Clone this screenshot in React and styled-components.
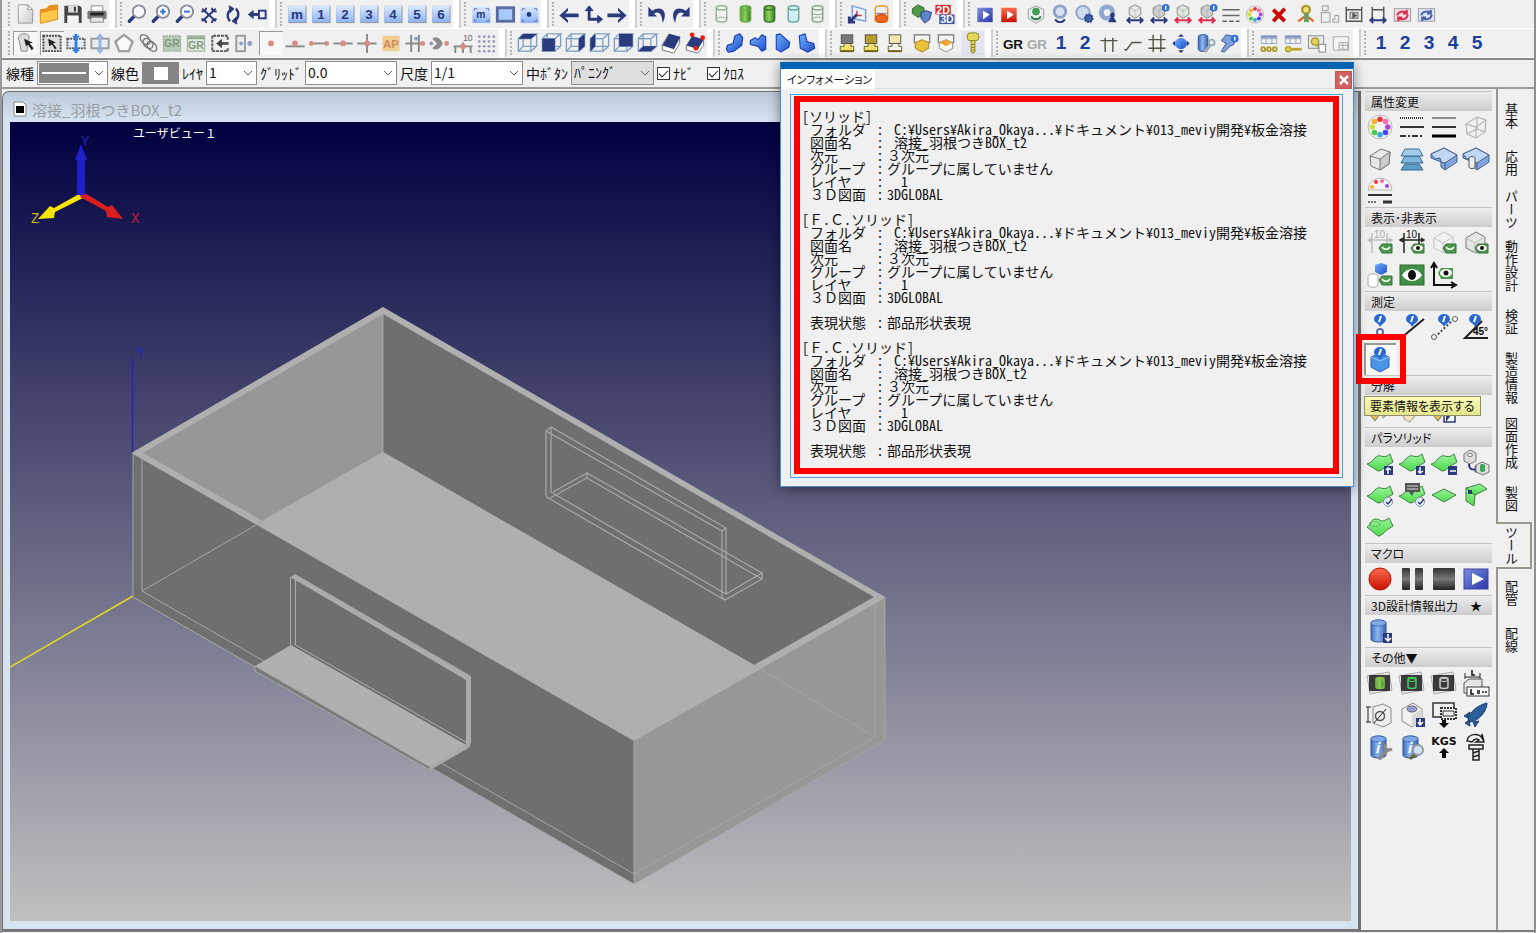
import React, { useState } from "react";
import styled, { createGlobalStyle, css } from "styled-components";

const GlobalStyle = createGlobalStyle`
  *, *::before, *::after {
    box-sizing: border-box;
  }
  body {
    margin: 0;
    background: #f0f0f0;
    color: #111;
    font-family: "Noto Sans CJK JP", "Liberation Sans", sans-serif;
    font-size: 14px;
  }
  button, select, input {
    font: inherit;
    color: inherit;
    margin: 0;
  }
`;

const NAVY = "#2b3a7c";
const GRAY = "#8a8a8a";

/* ---------- drawing parts shared by the icons ---------- */

const Defs = () => (
  <svg width="0" height="0" style={{ position: "absolute" }} aria-hidden="true">
    <defs>
      <linearGradient id="gKey" x2="0" y2="1">
        <stop offset="0" stopColor="#dbe9ff" />
        <stop offset="1" stopColor="#8db4f5" />
      </linearGradient>
      <linearGradient id="gGreenCyl">
        <stop offset="0" stopColor="#4f9a2c" />
        <stop offset=".45" stopColor="#8fd45c" />
        <stop offset="1" stopColor="#2f7a1c" />
      </linearGradient>
      <linearGradient id="gBlueCyl">
        <stop offset="0" stopColor="#3f6fc4" />
        <stop offset=".45" stopColor="#8fb6ee" />
        <stop offset="1" stopColor="#3a63b4" />
      </linearGradient>
      <linearGradient id="gBlue" x2="1" y2="1">
        <stop offset="0" stopColor="#6fb0ff" />
        <stop offset="1" stopColor="#1f4fc8" />
      </linearGradient>
      <linearGradient id="gPlay" x2="1" y2="1">
        <stop offset="0" stopColor="#7f8fe0" />
        <stop offset="1" stopColor="#2a35a8" />
      </linearGradient>
      <linearGradient id="gRed" x2="0" y2="1">
        <stop offset="0" stopColor="#ff6a50" />
        <stop offset="1" stopColor="#c81000" />
      </linearGradient>
      <linearGradient id="gDark" x2="0" y2="1">
        <stop offset="0" stopColor="#333" />
        <stop offset=".5" stopColor="#777" />
        <stop offset="1" stopColor="#222" />
      </linearGradient>
      <linearGradient id="gLeaf" x2="0" y2="1">
        <stop offset="0" stopColor="#9af59a" />
        <stop offset="1" stopColor="#4fd84f" />
      </linearGradient>
      <linearGradient id="gPaper" x2="1" y2="1">
        <stop offset="0" stopColor="#fff" />
        <stop offset="1" stopColor="#ccc" />
      </linearGradient>
    </defs>
  </svg>
);

const Lens = ({ children }) => (
  <g>
    <path d="M10 14L4 20" stroke={NAVY} strokeWidth="3.5" strokeLinecap="round" />
    <circle cx="14" cy="10" r="6.5" fill="#f4f6fa" stroke="#8b8f99" strokeWidth="2" />
    {children}
  </g>
);

const Key = ({ label }) => (
  <g>
    <rect x="3" y="4" width="19" height="18" fill="#9a9a9a" />
    <rect x="3" y="4" width="18" height="17" fill="url(#gKey)" />
    <text x="12" y="18" textAnchor="middle" fontSize="14" fontWeight="700" fontFamily="Liberation Sans" fill={NAVY}>
      {label}
    </text>
  </g>
);

const Digit = ({ label, color = "#1c3f9a", size = 20 }) => (
  <text x="12" y="19" textAnchor="middle" fontSize={size} fontWeight="700" fontFamily="Liberation Sans" fill={color}>
    {label}
  </text>
);

const Cyl = ({ fill = "none", stroke = "#4f8a54" }) => (
  <g fill={fill} stroke={stroke} strokeWidth="1.3">
    <path d="M7 6v12c0 4 11 4 11 0V6" />
    <ellipse cx="12.500" cy="6" rx="5.500" ry="2.300" />
    {fill === "none" && <path d="M7 18c0-3 11-3 11 0" opacity=".6" />}
  </g>
);

const WireCube = ({ face }) => (
  <g>
    <g fill="none" stroke="#7fa0c4" strokeWidth="1.4">
      <rect x="3" y="8" width="13" height="13" />
      <path d="M3 8l5-5h14l-6 5M22 3v13l-6 5M8 3v13h14M8 16l-5 5" />
    </g>
    <path d={face} fill={NAVY} />
  </g>
);

const Hex = ({ fill = "#e8e8e8", stroke = "#8a8a8a" }) => (
  <g stroke={stroke} fill={fill} strokeLinejoin="round">
    <path d="M12 3l6 3v7l-6 4-6-4V6z" />
    <path d="M6 6l6 3 6-3M12 9v8" fill="none" opacity=".4" />
  </g>
);

const Solid = ({ d }) => (
  <path d={d} fill="url(#gBlue)" stroke="#1b3fae" strokeWidth="1.2" strokeLinejoin="round" />
);

const Span = ({ color }) => (
  <path d="M4 19h16M7 16l-3 3 3 3M17 16l3 3-3 3" fill="none" stroke={color} strokeWidth="2" />
);

const Info = ({ x = 19, y = 6 }) => (
  <g>
    <circle cx={x} cy={y} r="4" fill="#2f6fd6" />
    <path d={`M${x} ${y - 2}v4`} stroke="#fff" strokeWidth="1.5" />
  </g>
);

const Person = ({ lid, body = "#efe070" }) => (
  <g stroke="#6f6420" fill={body}>
    <path d="M5 21v-5h4v-3h7v3h3v5z" />
    <path d="M5 21h14" strokeWidth="2" />
    <rect x="6" y="4" width="12" height="9" fill={lid} stroke="#555" />
  </g>
);

const Wheel = ({ cx, cy, r }) => {
  const hues = ["#e33", "#f6a", "#a4c", "#44f", "#3ad", "#4c4", "#cd3", "#fa3"];
  return (
    <g>
      <circle cx={cx} cy={cy} r={r} fill="#f4f4f4" stroke="#b8b8b8" />
      {hues.map((h, i) => (
        <circle
          key={h}
          cx={cx + Math.sin((i * Math.PI) / 4) * r * 0.65}
          cy={cy - Math.cos((i * Math.PI) / 4) * r * 0.65}
          r={r * 0.23}
          fill={h}
        />
      ))}
    </g>
  );
};

/* ---------- toolbar icons, 24 x 24 ---------- */

const icons = {
  new: <path d="M5 3h10l5 5v14H5zM15 3v5h5" fill="url(#gPaper)" stroke="#999" />,
  open: (
    <g stroke="#d98a10" strokeLinejoin="round">
      <path d="M3 8l7-1 2-3 9-1v5L3 12z" fill="#e8941c" />
      <path d="M3 11l18-4v11L5 22H3z" fill="#ffc84a" />
    </g>
  ),
  save: (
    <g>
      <path d="M3 4h16l2 2v16H3z" fill="#444" />
      <rect x="7" y="4" width="10" height="7" fill="#ddd" />
      <rect x="13" y="5" width="2" height="5" fill="#333" />
      <rect x="6" y="14" width="12" height="8" fill="#f4f4f4" />
    </g>
  ),
  print: (
    <g>
      <path d="M6 4h12v6H6z" fill="#fff" stroke="#888" />
      <rect x="2" y="9" width="20" height="9" rx="2" fill="#777" />
      <rect x="5" y="11" width="14" height="3" fill="#222" />
      <path d="M6 16h12l1 5H5z" fill="#e8e8e8" stroke="#888" />
    </g>
  ),
  lens: <Lens />,
  zoomIn: (
    <Lens>
      <path d="M14 7v6M11 10h6" stroke="#2f6fd6" strokeWidth="2" />
    </Lens>
  ),
  zoomOut: (
    <Lens>
      <path d="M11 10h6" stroke="#2f6fd6" strokeWidth="2" />
    </Lens>
  ),
  fit: (
    <g fill="none" stroke={NAVY}>
      <path d="M5 7l14 13M19 7L5 20" strokeWidth="2" />
      <path d="M9 6c0 3-2 4-5 4M15 6c0 3 2 4 5 4M9 22c0-3-2-4-5-4M15 22c0-3 2-4 5-4" strokeWidth="2" />
    </g>
  ),
  rotate: (
    <g fill="none" stroke={NAVY} strokeWidth="2.500">
      <path d="M9 20a8 8 0 0 1 2-13" />
      <path d="M15 7a8 8 0 0 1-2 13" />
      <path d="M8 4l5 3-4 4zM16 23l-5-3 4-4z" strokeWidth="1" fill={NAVY} />
    </g>
  ),
  pan: (
    <g fill="none" stroke={NAVY} strokeWidth="2">
      <path d="M14 13H5" strokeWidth="3" />
      <path d="M3 13l5-4v8z" fill={NAVY} strokeWidth="1" />
      <rect x="14" y="9" width="7" height="8" />
    </g>
  ),
  frameM: (
    <g>
      <rect x="3" y="5" width="19" height="17" fill="url(#gKey)" />
      <path d="M5 9V7h3M17 7h3v2M5 18v2h3M17 20h3v-2" fill="none" stroke="#6477a8" />
      <text x="12" y="17" textAnchor="middle" fontSize="10" fontWeight="700" fill={NAVY}>
        m
      </text>
    </g>
  ),
  frameFull: <rect x="4" y="6" width="17" height="14" fill="#a9c8fb" stroke="#5a6ca0" strokeWidth="3" />,
  frameDot: (
    <g>
      <rect x="3" y="5" width="19" height="17" fill="url(#gKey)" />
      <path d="M5 9V7h3M17 7h3v2M5 18v2h3M17 20h3v-2" fill="none" stroke="#6477a8" />
      <circle cx="12" cy="13" r="2.500" fill={NAVY} />
    </g>
  ),
  left: <path d="M2 14l9-8v3l-3 3h14v4H8l3 3v3z" fill={NAVY} />,
  right: <path d="M22 14l-9-8v3l3 3H2v4h14l-3 3v3z" fill={NAVY} />,
  upRight: (
    <g stroke={NAVY} fill={NAVY}>
      <path d="M8 8v10h10" strokeWidth="3" fill="none" />
      <path d="M8 4l4 5H4zM22 18l-5-4v8z" />
    </g>
  ),
  undo: <path d="M3 5v10h9l-3-3c5-3 8 0 9 10C24 10 17 3 7 9z" fill={NAVY} />,
  redo: <path d="M21 5v10h-9l3-3c-5-3-8 0-9 10C0 10 7 3 17 9z" fill={NAVY} />,
  cylOpen: <Cyl stroke="#8aa88c" />,
  cylGreen: <Cyl fill="url(#gGreenCyl)" stroke="#6aae50" />,
  cylDark: <Cyl fill="url(#gGreenCyl)" stroke="#2d6e22" />,
  cylBlue: <Cyl fill="#cdeefa" stroke="#5aa087" />,
  cylWire: (
    <g>
      <Cyl stroke="#7f9c84" />
      <path d="M7 11c0 3 11 3 11 0" fill="none" stroke="#7f9c84" />
    </g>
  ),
  plane: (
    <g fill="none">
      <path d="M7 4l14 4v12L7 17z" stroke="#7b9cdc" strokeWidth="1.500" fill="#eaf1ff" />
      <path d="M12 9v5h5" stroke="#e33" strokeWidth="1.500" />
      <path d="M12 13l-7 7M4 15v6h6" stroke={NAVY} strokeWidth="3" />
    </g>
  ),
  cylOrange: (
    <g strokeWidth="1.500">
      <path d="M6 7v12c0 3 13 3 13 0V7c0-4-13-4-13 0z" fill="#eee" stroke="#e8982c" />
      <path d="M6 12h13" stroke="#999" />
      <ellipse cx="12.500" cy="17" rx="6" ry="4" fill="#f46a1c" stroke="#d04a10" />
    </g>
  ),
  swapSolid: (
    <g>
      <path d="M3 7l6-4 6 3v7l-6 3-6-4z" fill="#4f9a4a" stroke="#2c6a2a" />
      <path d="M12 11l5-2 6 2-2 7-5 4-4-5z" fill="#5b86cc" stroke={NAVY} />
    </g>
  ),
  twoThree: (
    <g fontSize="11" fontWeight="700" fontFamily="Liberation Sans">
      <rect x="2" y="3" width="16" height="10" fill="#d8262a" />
      <text x="3" y="12" fill="#fff">
        2D
      </text>
      <rect x="6" y="13" width="16" height="10" fill="#3f58a8" />
      <text x="7" y="22" fill="#fff">
        3D
      </text>
    </g>
  ),
  playBlue: (
    <g>
      <rect x="4" y="6" width="16" height="15" fill="url(#gPlay)" />
      <path d="M10 9l7 4-7 5z" fill="#fff" />
    </g>
  ),
  playRed: (
    <g>
      <rect x="4" y="6" width="16" height="15" fill="url(#gRed)" />
      <path d="M10 9l7 4-7 5z" fill="#fff" />
    </g>
  ),
  hexGreen: (
    <g>
      <path d="M12 4l8 4v9l-8 5-8-5V8z" fill="#eee" stroke="#999" />
      <circle cx="12" cy="10" r="4" fill="#3fa05a" />
      <path d="M7 15c2 4 8 4 10 0" stroke="#2c7a50" strokeWidth="2" fill="none" />
    </g>
  ),
  ringA: (
    <g fill="none">
      <circle cx="12" cy="10" r="6" stroke="#90a4c8" strokeWidth="3" fill="#d8e2f4" />
      <path d="M7 18c2 4 8 4 10 0" stroke={NAVY} strokeWidth="2" />
    </g>
  ),
  ringB: (
    <g>
      <circle cx="11" cy="11" r="7" fill="#cddcf0" stroke="#90a4c8" strokeWidth="2" />
      <circle cx="17" cy="17" r="4" fill="#3f63a8" stroke={NAVY} strokeDasharray="2 1" strokeWidth="2" />
    </g>
  ),
  ringC: (
    <g>
      <circle cx="11" cy="11" r="6" fill="none" stroke="#90a8d0" strokeWidth="5" />
      <path d="M17 11a3 3 0 0 1 1 5l3 5h-9l3-5a3 3 0 0 1 2-5" fill={NAVY} />
    </g>
  ),
  hexSpan: (
    <g>
      <Hex />
      <Span color={NAVY} />
    </g>
  ),
  hexSpanInfo: (
    <g>
      <Hex fill="#d0d0d0" />
      <Span color={NAVY} />
      <Info />
    </g>
  ),
  hexRed: (
    <g>
      <Hex fill="#dfe8df" />
      <Span color="#e02a4a" />
    </g>
  ),
  hexRedInfo: (
    <g>
      <Hex fill="#d0d0d0" />
      <Span color="#e02a4a" />
      <Info />
    </g>
  ),
  lines: (
    <g stroke="#666" strokeWidth="1.500">
      <path d="M3 8h18M3 14h18" />
      <path d="M3 20h18" strokeDasharray="5 2" />
    </g>
  ),
  wheel: <Wheel cx={12} cy={13} r={9} />,
  cross: <path d="M6 8l12 12M18 7L6 20" stroke="#cc0a0a" strokeWidth="4" />,
  axisKey: (
    <g fill="none" strokeWidth="2.500">
      <path d="M12 3v11" stroke="#c8a820" />
      <path d="M12 14l-8 6M12 14l8 6" stroke="#e07030" />
      <circle cx="12" cy="8" r="4" stroke="#b09a30" fill="#efe080" />
      <rect x="10" y="12" width="5" height="9" stroke="none" fill="#6aa06a" />
    </g>
  ),
  bottle: (
    <g fill="#eee" stroke="#999">
      <rect x="4" y="4" width="6" height="5" />
      <rect x="3" y="11" width="9" height="10" />
      <path d="M17 14h4v7h-6v-3h2z" />
    </g>
  ),
  dimPlay: (
    <g fill="none" stroke="#555" strokeWidth="1.500">
      <path d="M4 5v16M20 5v16M4 8h16M4 20h16" />
      <rect x="8" y="11" width="8" height="6" fill="#d8e2f4" stroke="#888" />
      <path d="M11 12l3 2-3 2z" fill={NAVY} />
    </g>
  ),
  dimSpan: (
    <g fill="none" stroke="#555" strokeWidth="1.500">
      <path d="M6 5v15M18 5v15M6 8h12" />
      <path d="M4 19h16M7 16l-3 3 3 3M17 16l3 3-3 3" stroke={NAVY} strokeWidth="2" />
    </g>
  ),
  loopRed: (
    <g fill="none">
      <rect x="4" y="7" width="17" height="13" fill="#f6dfe4" stroke="#999" />
      <path d="M7 14c1-5 8-5 10-2M18 13c-1 6-8 6-10 3M17 8v4h-4M8 20v-4h4" stroke="#e02a4a" strokeWidth="2" />
    </g>
  ),
  loopBlue: (
    <g fill="none">
      <rect x="4" y="7" width="17" height="13" fill="#dfe6f6" stroke="#999" />
      <path d="M7 14c1-5 8-5 10-2M18 13c-1 6-8 6-10 3M17 8v4h-4M8 20v-4h4" stroke="#4a5fa8" strokeWidth="2" />
    </g>
  ),

  pickGlove: (
    <g>
      <path d="M6 10c-3-4 2-8 6-7 4 0 6 4 3 7l-1 11H8z" fill="#ddd" stroke="#888" />
      <path d="M11 8l9 4-3 1 4 5-2 2-4-6-2 2z" fill="#222" />
    </g>
  ),
  pickBox: (
    <g>
      <rect x="3" y="5" width="18" height="16" fill="#ddd" stroke="#444" strokeWidth="2" strokeDasharray="2 1" />
      <path d="M8 8l8 4-3 1 4 5-2 1-3-5-3 2z" fill="#222" />
    </g>
  ),
  pickCross: (
    <g>
      <rect x="3" y="8" width="18" height="10" fill="#e4ecf8" stroke="#555" strokeDasharray="2 1" strokeWidth="2" />
      <path d="M12 3v20" stroke="#2f7fe0" strokeWidth="3" />
      <path d="M12 10L8 5h8zM12 16l-4 5h8z" fill="#2f7fe0" />
    </g>
  ),
  pickCrossDim: (
    <g opacity=".6">
      <rect x="3" y="8" width="18" height="10" fill="#e4ecf8" stroke="#666" strokeWidth="2" />
      <path d="M12 5v16" stroke="#5a92dc" strokeWidth="3" />
      <path d="M12 2L8 7h8zM12 24l-4-5h8z" fill="#5a92dc" />
    </g>
  ),
  penta: <path d="M12 4l9 7-4 10H7L3 11z" fill="#fafafa" stroke="#a0a0a0" strokeWidth="2.500" />,
  chain: (
    <g fill="none" stroke="#777" strokeWidth="1.500">
      <ellipse cx="9" cy="9" rx="6" ry="4" transform="rotate(45 9 9)" />
      <ellipse cx="12" cy="13" rx="6" ry="4" transform="rotate(45 12 13)" />
      <ellipse cx="16" cy="16" rx="6" ry="4" transform="rotate(45 16 16)" />
    </g>
  ),
  grBox: (
    <g>
      <rect x="3" y="5" width="18" height="16" fill="#b9cbb9" stroke="#8aa08a" strokeDasharray="2 1" />
      <text x="12" y="17" textAnchor="middle" fontSize="11" fontWeight="700" fontFamily="Liberation Sans" fill="#7f9c80">
        GR
      </text>
    </g>
  ),
  grWin: (
    <g>
      <rect x="3" y="5" width="18" height="16" fill="#dfe6df" stroke="#9aac9a" />
      <path d="M3 7h18" stroke="#9aac9a" strokeWidth="3" />
      <text x="12" y="19" textAnchor="middle" fontSize="11" fontWeight="700" fontFamily="Liberation Sans" fill="#7f9c80">
        GR
      </text>
    </g>
  ),
  exitBox: (
    <g fill="none" stroke="#555" strokeWidth="2">
      <path d="M20 9V5H4v16h16v-4" strokeDasharray="3 1" />
      <path d="M21 13h-8" strokeWidth="3" />
      <path d="M8 13l6-5v10z" fill="#444" stroke="none" />
    </g>
  ),
  door: (
    <g>
      <rect x="4" y="5" width="9" height="16" fill="#eee" stroke="#999" strokeWidth="2" />
      <circle cx="9" cy="13" r="2" fill="#8f9cc4" />
      <circle cx="18" cy="13" r="2.500" fill="#8f9cc4" />
    </g>
  ),
  pt: <circle cx="12" cy="13" r="3" fill="#dd8a80" />,
  ptLine: (
    <g>
      <path d="M2 16h20" stroke={GRAY} strokeWidth="2" />
      <circle cx="12" cy="13" r="3" fill="#dd8a80" />
    </g>
  ),
  ptEnds: (
    <g fill="#dd8a80">
      <path d="M4 13h16" stroke={GRAY} strokeWidth="2" />
      <circle cx="4" cy="13" r="2.500" />
      <circle cx="20" cy="13" r="2.500" />
    </g>
  ),
  ptMid: (
    <g fill="#dd8a80">
      <path d="M2 13h20" stroke={GRAY} strokeWidth="2" />
      <circle cx="12" cy="13" r="3" />
    </g>
  ),
  ptCross: (
    <g fill="#dd8a80">
      <path d="M2 13h20M12 3v20" stroke={GRAY} strokeWidth="2" />
      <circle cx="12" cy="13" r="3" />
    </g>
  ),
  ap: (
    <g>
      <rect x="3" y="5" width="18" height="16" fill="#f0cf90" />
      <text x="12" y="18" textAnchor="middle" fontSize="12" fontWeight="700" fontFamily="Liberation Sans" fill="#d08a60">
        AP
      </text>
    </g>
  ),
  ptGrid: (
    <g>
      <path d="M2 13h20M8 4v18M16 4v18" stroke={GRAY} strokeWidth="2" />
      <circle cx="13" cy="8" r="2" fill="#8f9cc4" />
      <circle cx="20" cy="13" r="2.500" fill="#dd8a80" />
    </g>
  ),
  ptArc: (
    <g>
      <circle cx="4" cy="13" r="2" fill="#8f9cc4" />
      <path d="M5 8c4-3 8-1 11 5-3 6-7 8-11 5l5-5z" fill={GRAY} />
      <circle cx="20" cy="13" r="2.500" fill="#dd8a80" />
    </g>
  ),
  ptTen: (
    <g>
      <path d="M2 16h20M4 16v7M12 12v11M20 16v7" stroke={GRAY} strokeWidth="2" />
      <circle cx="12" cy="16" r="3" fill="#dd8a80" />
      <text x="12" y="10" fontSize="9" fontFamily="Liberation Sans" fill="#666">
        10
      </text>
    </g>
  ),
  dots: (
    <g fill="#9aa2b8">
      {[6, 11, 16, 21].map((y) => [4, 9, 14, 19].map((x) => <circle key={`${x}-${y}`} cx={x} cy={y} r="1.500" />))}
    </g>
  ),
  cubeTop: <WireCube face="M3 8l5-5h14l-6 5z" />,
  cubeFront: <WireCube face="M3 8h13v13H3z" />,
  cubeRight: <WireCube face="M16 8l6-5v13l-6 5z" />,
  cubeLeft: <WireCube face="M3 8l5-5v13l-5 5z" />,
  cubeBack: <WireCube face="M8 3h14v13H8z" />,
  cubeBottom: <WireCube face="M3 21l5-5h14l-6 5z" />,
  cubeTilt: (
    <g strokeLinejoin="round">
      <path d="M3 14v6l12 3 6-10V7L10 3z" fill="#fff" stroke="#777" />
      <path d="M3 15L10 3l12 3-7 13z" fill={NAVY} />
    </g>
  ),
  cubePts: (
    <g>
      <path d="M3 15v5l12 3 6-8v-5z" fill="#fff" stroke="#777" />
      <path d="M3 15L9 5l12 4-6 10z" fill={NAVY} />
      <g fill="#f21c0c">
        <circle cx="9" cy="4" r="2.500" />
        <circle cx="20" cy="7" r="2.500" />
        <circle cx="13" cy="18" r="2.500" />
      </g>
    </g>
  ),
  solidA: <Solid d="M4 15l6-2 2-8 5-2 3 4-1 8-8 6-6 1-2-3z" />,
  solidB: <Solid d="M3 10l5-3 3 2 4-5 4 2v13l-4 2-4-5-8-2z" />,
  solidC: <Solid d="M5 4l4-1 10 9-1 5-8 5-5-3z" />,
  solidD: <Solid d="M4 5l6-2 2 8 7 2 1 5-7 4-8-4z" />,
  man1: <Person lid="#777" />,
  man2: <Person lid="#b89c30" />,
  man3: <Person lid="#efe9b0" body="#f4f4f4" />,
  crate: (
    <g>
      <rect x="4" y="4" width="16" height="8" fill="#f4f4f4" stroke="#888" strokeWidth="1.500" />
      <path d="M5 12l7-3 7 3v6l-7 4-7-4z" fill="#e8c23a" stroke="#a8861c" />
    </g>
  ),
  crateOpen: (
    <g>
      <rect x="4" y="4" width="16" height="8" fill="#f4f4f4" stroke="#888" strokeWidth="1.500" />
      <path d="M5 12l7-3 7 3v6l-7 4-7-4z" fill="#fafafa" stroke="#888" />
      <path d="M5 12l7-3 7 3-7 4z" fill="#f0a52c" />
    </g>
  ),
  bolt: (
    <g>
      <rect width="24" height="25" fill="#e4e4f0" />
      <g fill="#e4d85a" stroke="#8f8420">
        <rect x="6" y="2" width="12" height="8" rx="3" />
        <path d="M10 10h4v12l-2 1-2-1zM10 14h4M10 17h4M10 20h4" />
      </g>
    </g>
  ),
  gr: <Digit label="GR" color="#111" size={14} />,
  grDim: <Digit label="GR" color="#a8a8a8" size={14} />,
  fence: <path d="M3 10h18M8 7v15M16 7v15" fill="none" stroke="#55564a" strokeWidth="1.500" />,
  leader: <path d="M3 19l2 1 6-8h10" fill="none" stroke="#55564a" strokeWidth="1.500" />,
  hash: <path d="M3 9h18M3 18h18M8 4v18M16 4v18" stroke="#55564a" strokeWidth="1.500" />,
  orbit: (
    <g fill={NAVY}>
      <circle cx="12" cy="13" r="6" fill="url(#gBlue)" />
      <path d="M12 3l3 3H9zM12 23l3-3H9zM3 13l3-3v6zM21 13l-3-3v6z" />
    </g>
  ),
  dbWrench: (
    <g>
      <path d="M5 6v13c0 3 10 3 10 0V6c0-3-10-3-10 0z" fill="url(#gBlueCyl)" stroke="#2f5090" />
      <path d="M12 22l6-8" stroke="#9ab" strokeWidth="3" />
      <circle cx="19" cy="12" r="3" fill="none" stroke="#9ab" strokeWidth="2" />
    </g>
  ),
  toolInfo: (
    <g>
      <path d="M4 10l5-6 10 2-2 8-4 2-6 6-3-1 5-8z" fill="#7ba0dc" stroke="#3a5a98" />
      <Info x={18} y={8} />
    </g>
  ),
  tableRings: (
    <g fill="none">
      <path d="M4 5h16v8H4zM4 8h16M9 5v8M15 5v8" stroke="#9aa4c0" />
      <path d="M4 5h16v2H4z" fill="#7d8fc0" />
      <circle cx="6" cy="19" r="2" stroke="#b0a030" strokeWidth="2" />
      <circle cx="12" cy="19" r="2" stroke="#b0a030" strokeWidth="2" />
      <circle cx="18" cy="19" r="2" stroke="#b0a030" strokeWidth="2" />
    </g>
  ),
  tableKey: (
    <g fill="none">
      <path d="M4 5h16v8H4zM4 8h16M9 5v8M15 5v8" stroke="#9aa4c0" />
      <path d="M4 5h16v2H4z" fill="#7d8fc0" />
      <circle cx="7" cy="19" r="3" fill="#dccb3a" stroke="#9a8c20" />
      <path d="M10 19h11" stroke="#b8a830" strokeWidth="3" />
    </g>
  ),
  cardKey: (
    <g>
      <rect x="3" y="5" width="16" height="13" fill="#e8e8e8" stroke="#888" />
      <circle cx="10" cy="11" r="4" fill="#e0d060" stroke="#8f8420" />
      <path d="M12 14l4 5" stroke="#b8a830" strokeWidth="3" />
      <path d="M14 14h7v8h-7z" fill="#fafafa" stroke="#888" />
    </g>
  ),
  tableDim: (
    <g fill="none" stroke="#aaa">
      <path d="M4 6h16v14H4z" fill="#f4f4f4" />
      <path d="M10 12h9v7h-9zM10 15h9M14 12v7" />
    </g>
  ),
};
["m", "1", "2", "3", "4", "5", "6"].forEach((k) => {
  icons[`key${k}`] = <Key label={k} />;
});
["1", "2", "3", "4", "5"].forEach((k) => {
  icons[`num${k}`] = <Digit label={k} />;
});

/* "|" leaves a small break between two runs of buttons, "*" marks a pressed one */
const rowOne = [
  "new open save print",
  "lens zoomIn zoomOut fit rotate pan",
  "keym key1 key2 key3 key4 key5 key6",
  "frameM frameFull frameDot",
  "left upRight right",
  "undo redo",
  "cylOpen cylGreen cylDark cylBlue cylWire",
  "plane cylOrange",
  "swapSolid twoThree",
  "playBlue playRed | hexGreen ringA ringB ringC | hexSpan hexSpanInfo hexRed hexRedInfo lines wheel cross | axisKey bottle dimPlay dimSpan loopRed loopBlue",
];

const rowTwo = [
  "pickGlove* | pickBox* pickCross pickCrossDim penta chain grBox grWin exitBox door | pt* ptLine ptEnds ptMid ptCross ap ptGrid ptArc ptTen dots",
  "cubeTop cubeFront cubeRight cubeLeft cubeBack cubeBottom cubeTilt cubePts",
  "solidA solidB solidC solidD",
  "man1 man2 man3 | crate crateOpen | bolt",
  "gr grDim num1 num2 fence leader hash orbit dbWrench toolInfo",
  "tableRings tableKey cardKey tableDim",
  "num1 num2 num3 num4 num5",
];

/* ---------- side panel icons, 28 x 28 ---------- */

const LeafShape = ({ children }) => (
  <g>
    <path
      d="M1 15c5-1 6-5 9-7 4-3 7 1 11-1l3-2 3 8-3 2c-5 2-7 7-12 7z"
      fill="url(#gLeaf)"
      stroke="#3f7f3f"
      strokeLinejoin="round"
    />
    {children}
  </g>
);

const Badge = ({ d }) => (
  <g>
    <rect x="18" y="17" width="9" height="9" fill={NAVY} />
    <path d={d} stroke="#fff" strokeWidth="1.500" fill="none" />
  </g>
);

const Tick = () => (
  <g fill="none">
    <circle cx="22" cy="21" r="4.500" fill="#eef2fa" stroke="#8a93a8" />
    <path d="M20 21l2 2 4-5" stroke={NAVY} strokeWidth="1.500" />
  </g>
);

const Eye = ({ closed }) => (
  <g>
    <path d="M13 19l3-4h10v9H16z" fill="#4b9a4e" stroke="#357238" />
    {closed ? (
      <path d="M16 18c2 3 6 3 8 0" stroke="#fff" strokeWidth="1.500" fill="none" />
    ) : (
      <g>
        <ellipse cx="20" cy="19" rx="5" ry="3" fill="#fff" />
        <circle cx="20" cy="19" r="2" fill="#111" />
      </g>
    )}
  </g>
);

const Pin = ({ x = 14, y = 6 }) => (
  <g>
    <path d={`M${x - 6} ${y}a6 5 0 1 1 12 0c0 4-4 4-6 8-1-4-6-4-6-8z`} fill="#2a6ad0" />
    <path d={`M${x + 1} ${y - 3}l-2 6`} stroke="#fff" strokeWidth="2" />
  </g>
);

const Box28 = ({ faded, fill = "#e6e6e6" }) => (
  <g stroke={faded ? "#c4c4c4" : "#777"} fill={faded ? "#f2f2f2" : fill} strokeLinejoin="round">
    <path d="M4 9l10-6 9 5v11l-9 5-10-5z" />
    <path d="M4 9l9 5 10-6M13 14v10" fill="none" stroke={faded ? "#c4c4c4" : "#bbb"} />
  </g>
);

const Db = ({ children }) => (
  <g>
    <path d="M5 6v16c0 4 15 4 15 0V6c0-4-15-4-15 0z" fill="url(#gBlueCyl)" stroke="#2f5090" />
    <ellipse cx="12.500" cy="6" rx="7.500" ry="3" fill="#7fa8e4" stroke="#4a72b4" />
    {children}
  </g>
);

const Slide = ({ fill, stroke }) => (
  <g>
    <path d="M1 7l22-4 3 18-22 4z" fill="#e4e4e4" stroke="#aaa" />
    <rect x="3" y="6" width="21" height="16" fill="#3a3a3a" />
    <path d="M10 10v8c0 2 8 2 8 0v-8c0-2-8-2-8 0z" fill={fill} stroke={stroke} strokeWidth="1.500" />
    <ellipse cx="14" cy="11" rx="4" ry="1.500" fill="none" stroke={stroke} />
  </g>
);

const Block = ({ children }) => (
  <g stroke="#4a5f86" strokeLinejoin="round">
    <path d="M1 9l13-6 13 7v7l-12 8-4-3v-5l-10-4z" fill="#7fa6e0" />
    <path d="M1 9l13-6 13 7-12 8-4-1-1-4-5 1z" fill="#c0d8f6" />
    <path d="M15 18v7" />
    {children}
  </g>
);

const DimTen = ({ faded, closed }) => (
  <g>
    <g stroke={faded ? "#bdbdbd" : "#222"} strokeWidth="1.500" fill="none">
      <path d="M2 11h24M6 4v20M21 4v12M5 9l-3 2 3 2M23 9l3 2-3 2" />
    </g>
    <text x="8" y="9" fontSize="10" fontFamily="Liberation Sans" fill={faded ? "#aaa" : "#111"}>
      10
    </text>
    <Eye closed={closed} />
  </g>
);

const sideIcons = {
  wheel: <Wheel cx={14} cy={14} r={12} />,
  lineTypes: (
    <g stroke="#333" strokeWidth="2">
      <path d="M2 5h24" strokeDasharray="1 1" />
      <path d="M2 14h24" />
      <path d="M2 23h24" strokeDasharray="6 2 2 2" />
    </g>
  ),
  lineWidths: (
    <g stroke="#333">
      <path d="M2 5h24" />
      <path d="M2 14h24" strokeWidth="2" />
      <path d="M2 23h24" strokeWidth="3" stroke="#000" />
    </g>
  ),
  boxGhost: (
    <g fill="none" stroke="#aaa" strokeLinejoin="round">
      <path d="M4 11l11-7 9 3-1 12-9 6-9-4zM4 11l10 3 10-7M14 14v11M15 4v12l-10 5M15 16l8 3" />
    </g>
  ),
  box: (
    <g stroke="#777" strokeLinejoin="round">
      <path d="M4 11l11-7 9 3-1 12-9 6-9-4z" fill="#e8e8e8" />
      <path d="M14 14l10-7-1 12-9 6z" fill="#ccc" />
      <path d="M4 11l10 3" />
    </g>
  ),
  layers: (
    <g fill="#5f9cc8" stroke="#34698f">
      <path d="M7 19h14l4 6H3z" />
      <path d="M7 11h14l4 7H3z" fill="#7fb4dc" />
      <path d="M7 4h14l4 7H3z" fill="#a4cdec" />
    </g>
  ),
  block: <Block />,
  blockPin: (
    <Block>
      <path d="M7 13v9c0 2 6 2 6 0v-9c0-2-6-2-6 0z" fill="#eee" stroke="#555" />
    </Block>
  ),
  wheelLines: (
    <g>
      <path d="M2 13a12 12 0 0 1 24 0z" fill="#f4f4f4" stroke="#b8b8b8" />
      <circle cx="6" cy="10" r="2" fill="#fa3" />
      <circle cx="10" cy="5" r="2" fill="#e33" />
      <circle cx="16" cy="4" r="2" fill="#f6a" />
      <circle cx="21" cy="9" r="2" fill="#a4c" />
      <path d="M2 18h24" stroke="#333" strokeWidth="2" />
      <path d="M2 25h9" stroke="#777" strokeWidth="2" strokeDasharray="2 1" />
      <path d="M17 25h9" stroke="#333" strokeWidth="3" />
    </g>
  ),
  dimHide: <DimTen faded closed />,
  dimShow: <DimTen />,
  boxHide: (
    <g>
      <Box28 faded />
      <Eye closed />
    </g>
  ),
  boxShow: (
    <g>
      <Box28 />
      <Eye />
    </g>
  ),
  partHide: (
    <g>
      <path d="M9 4l6-2 6 2v7l-6 3-6-3z" fill="url(#gBlue)" />
      <path d="M2 15v9c0 3 10 3 10 0v-9c0-3-10-3-10 0z" fill="#fff" stroke="#aaa" />
      <Eye closed />
    </g>
  ),
  bigEye: (
    <g>
      <rect x="2" y="4" width="24" height="20" fill="#3f8f46" stroke="#2c6a30" />
      <path d="M4 14c5-8 15-8 20 0-5 8-15 8-20 0z" fill="#fff" />
      <ellipse cx="14" cy="14" rx="4" ry="5" fill="#111" />
    </g>
  ),
  axisEye: (
    <g>
      <path d="M4 4v20h20M1 7l3-5 3 5M21 21l5 3-5 3" fill="none" stroke="#111" strokeWidth="2" />
      <path d="M8 12l3-5h12v11H11z" fill="#4b9a4e" />
      <ellipse cx="16" cy="12" rx="6" ry="4" fill="#fff" />
      <circle cx="16" cy="12" r="2.500" fill="#111" />
    </g>
  ),
  infoPoint: (
    <g>
      <Pin />
      <circle cx="14" cy="19" r="3" fill="#fff" stroke="#5a6ca0" strokeWidth="2" />
    </g>
  ),
  infoLine: (
    <g>
      <path d="M3 25L26 6" stroke="#222" strokeWidth="2" />
      <Pin />
    </g>
  ),
  infoDots: (
    <g>
      <path d="M5 24L24 6" stroke="#444" strokeWidth="2" strokeDasharray="2 2" />
      <circle cx="4" cy="24" r="2.500" fill="#fff" stroke="#555" />
      <circle cx="25" cy="6" r="2.500" fill="#fff" stroke="#555" />
      <Pin />
    </g>
  ),
  infoAngle: (
    <g>
      <path d="M26 25H3L20 8" fill="none" stroke="#222" strokeWidth="2" />
      <text x="11" y="22" fontSize="10" fontWeight="700" fontFamily="Liberation Sans">
        45°
      </text>
      <Pin x={13} />
    </g>
  ),
  infoSolid: (
    <g>
      <path d="M5 12l9-4 9 4v10l-9 5-9-5z" fill="#4a94e6" stroke="#2a64b4" />
      <path d="M5 12l9 4 9-4" stroke="#9cc8f6" fill="none" />
      <Pin y={7} />
    </g>
  ),
  splitA: (
    <g>
      <path d="M4 18l6-4 4 3-5 7z" fill="#e8bc3a" stroke="#777" />
      <path d="M15 15l7 2-5 4z" fill="#ddd" stroke="#888" />
    </g>
  ),
  splitB: <path d="M5 12l16 2-9 11-6-3z" fill="#f3e6c0" stroke="#999" />,
  splitC: (
    <g>
      <path d="M3 18l6-4 4 3-5 7z" fill="#e8bc3a" stroke="#777" />
      <path d="M14 12h11v13H14z" fill="#fff" stroke={NAVY} strokeWidth="1.500" />
      <path d="M23 14l-6 8v-5" stroke={NAVY} strokeWidth="2" fill="none" />
    </g>
  ),
  leafUp: (
    <LeafShape>
      <Badge d="M22 25v-6M20 21l2-2 3 2" />
    </LeafShape>
  ),
  leafDown: (
    <LeafShape>
      <Badge d="M22 18v6M20 22l2 2 3-2" />
    </LeafShape>
  ),
  leafMinus: (
    <LeafShape>
      <Badge d="M20 22h6" />
    </LeafShape>
  ),
  convert: (
    <g>
      <path d="M2 5l6-4 6 3v8l-6 3-6-3z" fill="#ddd" stroke="#777" />
      <ellipse cx="8" cy="6" rx="2.500" ry="1.500" fill="#fff" stroke="#777" />
      <path d="M7 15c0 6 4 6 8 5M13 17l3 3-3 3" fill="none" stroke={NAVY} strokeWidth="2" />
      <path d="M14 16l6-3 7 3v7l-6 3-7-3z" fill="#ddd" stroke="#777" />
      <rect x="18" y="15" width="5" height="8" rx="2" fill="#38a85c" />
    </g>
  ),
  leafCheck: (
    <LeafShape>
      <Tick />
    </LeafShape>
  ),
  leafNote: (
    <LeafShape>
      <rect x="7" y="2" width="15" height="9" fill="#555" />
      <path d="M9 5h11M9 8h11" stroke="#ddd" />
      <path d="M11 11h5l-2 4z" fill="#555" />
      <Tick />
    </LeafShape>
  ),
  sheet: <path d="M2 14l12-6 12 6-12 7z" fill="url(#gLeaf)" stroke="#3f7f3f" />,
  bend: (
    <g fill="url(#gLeaf)" stroke="#3f7f3f" strokeLinejoin="round">
      <path d="M4 7l14-4 7 5-12 6z" />
      <path d="M4 7l9 7-1 11-8-5z" />
      <rect x="6" y="9" width="4" height="4" fill={NAVY} stroke="none" />
    </g>
  ),
  leafDouble: (
    <g stroke="#3f7f3f" fill="url(#gLeaf)" strokeLinejoin="round">
      <path d="M1 14c3-1 3-7 8-8 4-1 5 3 9 2l5-3 4 8-3 2c-5 2-7 8-12 8z" />
      <path d="M4 12c1-5 9-5 10 0-3 2-7 2-10 0" fill="none" opacity=".4" />
    </g>
  ),
  record: <circle cx="14" cy="14" r="11" fill="url(#gRed)" stroke="#b01000" />,
  pause: (
    <g fill="url(#gDark)">
      <rect x="4" y="3" width="8" height="22" rx="1" />
      <rect x="17" y="3" width="8" height="22" rx="1" />
    </g>
  ),
  stop: <rect x="3" y="3" width="22" height="22" rx="1" fill="url(#gDark)" />,
  play: (
    <g>
      <rect x="2" y="4" width="24" height="20" fill="url(#gPlay)" stroke="#3a45a0" />
      <path d="M10 8l12 6-12 6z" fill="#fff" />
    </g>
  ),
  dbDown: (
    <Db>
      <rect x="17" y="16" width="9" height="10" fill={NAVY} />
      <path d="M22 17v6M19 21l3 3 3-3" stroke="#fff" strokeWidth="1.500" fill="none" />
    </Db>
  ),
  slideGreen: <Slide fill="url(#gGreenCyl)" stroke="#7fc050" />,
  slideWire: <Slide fill="none" stroke="#3fd060" />,
  slideGray: <Slide fill="none" stroke="#ccc" />,
  lengthLabel: (
    <g fill="none" stroke="#555">
      <path d="M3 4v6M18 4v6M3 8h15" stroke="#222" />
      <path d="M2 14l5-4h13v8M2 14v10h8" fill="#e4e4e4" />
      <rect x="5" y="18" width="22" height="9" fill="#fff" stroke="#333" />
      <path d="M9 20v5h3M15 22h3M15 24h3M20 23h2M23 23h2" stroke="#111" strokeWidth="1.500" />
      <path d="M10 1v5h3" stroke="#111" strokeWidth="1.500" />
    </g>
  ),
  diameter: (
    <g fill="none" stroke="#888">
      <path d="M7 6l10-3 8 4v15l-8 4-10-4z" fill="#eee" />
      <path d="M2 6v15M0 6h5M0 21h5" stroke="#222" />
      <circle cx="14" cy="15" r="4.500" stroke="#555" strokeWidth="1.500" />
      <path d="M8 22L20 8" stroke="#222" />
    </g>
  ),
  hexDown: (
    <g>
      <path d="M4 8l11-6 9 6v12l-10 6-10-6z" fill="#f2f2f2" stroke="#888" />
      <path d="M14 14l10-6v12l-10 6z" fill="#d8d8d8" />
      <ellipse cx="14" cy="8" rx="5" ry="3" fill="#9a9ae0" stroke="#666" />
      <rect x="18" y="17" width="9" height="9" fill={NAVY} />
      <path d="M22 18v5M20 21l2 3 3-3" stroke="#fff" strokeWidth="1.500" fill="none" />
    </g>
  ),
  windowDown: (
    <g fill="none" stroke="#333">
      <path d="M10 16H3V2h21v5" strokeWidth="1.500" />
      <rect x="11" y="7" width="15" height="11" strokeDasharray="2 1" strokeWidth="2" />
      <path d="M13 10h11v5H13z" />
      <path d="M12 19h4v3h3l-5 5-5-5h3z" fill="#111" stroke="none" />
    </g>
  ),
  rocket: (
    <g fill="#2b5f9c" stroke="#163c6c">
      <path d="M6 19C7 11 16 4 25 2c0 8-8 18-17 19z" />
      <path d="M8 11l-6 4 4 2zM17 20l-4 6-2-5zM3 22l4-3 1 6z" />
    </g>
  ),
  dbWrench: (
    <Db>
      <text x="9" y="20" fontSize="14" fontWeight="700" fontStyle="italic" fill="#fff">
        i
      </text>
      <path d="M14 25l7-8" stroke="#8a8a8a" strokeWidth="4" strokeLinecap="round" />
      <path d="M20 11c-3 3 0 8 6 5" stroke="#8a8a8a" strokeWidth="3" fill="none" />
    </Db>
  ),
  dbLens: (
    <Db>
      <text x="9" y="20" fontSize="14" fontWeight="700" fontStyle="italic" fill="#fff">
        i
      </text>
      <path d="M17 21l-5 5" stroke="#6f6a20" strokeWidth="3" />
      <circle cx="20" cy="17" r="5" fill="#cfe4fa" stroke="#999" strokeWidth="2" />
    </Db>
  ),
  kgs: (
    <g>
      <text x="14" y="12" textAnchor="middle" fontSize="11" fontWeight="700" fontFamily="DejaVu Sans" fill="#111">
        KGS
      </text>
      <path d="M12 25v-5H9l5-5 5 5h-3v5z" fill="#111" />
    </g>
  ),
  screw: (
    <g fill="none" stroke="#222" strokeWidth="1.500">
      <path d="M5 8c1-8 12-8 15-3V1l2 8h-8l3-2c-3-2-5-1-7 2z" />
      <path d="M7 12h14v4H7zM11 16v11h6V16M11 20l6-2M11 24l6-2" />
    </g>
  ),
};

const panelSections = [
  {
    title: "属性変更",
    rows: ["wheel lineTypes lineWidths boxGhost", "box layers block blockPin", "wheelLines"],
  },
  { title: "表示･非表示", rows: ["dimHide dimShow boxHide boxShow", "partHide bigEye axisEye"] },
  { title: "測定", rows: ["infoPoint infoLine infoDots infoAngle", "infoSolid"] },
  { title: "分解", rows: ["splitA splitB splitC"] },
  {
    title: "パラソリッド",
    rows: ["leafUp leafDown leafMinus convert", "leafCheck leafNote sheet bend", "leafDouble"],
  },
  { title: "マクロ", rows: ["record pause stop play"] },
  { title: "3D設計情報出力　★", rows: ["dbDown"] },
  {
    title: "その他▼",
    rows: ["slideGreen slideWire slideGray lengthLabel", "diameter hexDown windowDown rocket", "dbWrench dbLens kgs screw"],
  },
];

const sideTabs = ["基本", "応用", "パーツ", "動作設計", "検証", "製造情報", "図面作成", "製図", "ツール", "配管", "配線"];

const solidRows = [
  ["フォルダ", " C:¥Users¥Akira_Okaya...¥ドキュメント¥013_meviy開発¥板金溶接"],
  ["図面名", " 溶接_羽根つきBOX_t2"],
  ["次元", "３次元"],
  ["グループ", "グループに属していません"],
  ["レイヤ", "  1"],
  ["３Ｄ図面", "3DGLOBAL"],
];

const infoBlocks = [
  { heading: "[ソリッド]" },
  { heading: "[Ｆ.Ｃ.ソリッド]", state: "部品形状表現" },
  { heading: "[Ｆ.Ｃ.ソリッド]", state: "部品形状表現" },
];

/* ---------- layout ---------- */

const Shell = styled.div`
  position: relative;
  display: flex;
  flex-direction: column;
  min-height: 100vh;
  border-left: 2px solid #9a9a9a;
  border-right: 2px solid #8f8f8f;
  overflow: hidden;
`;

const Toolbar = styled.div`
  display: flex;
  height: 29px;
  padding-left: 3px;
  border-bottom: 1px solid #fff;
`;

const Group = styled.div`
  display: flex;
  align-items: center;
  flex: none;
  padding-right: 6px;
  border-right: 2px solid #d0d0d0;
  box-shadow: inset -6px 0 0 #fff;

  &::before {
    content: "";
    align-self: stretch;
    width: 2px;
    margin: 2px 3px;
    border-left: 2px dotted #b4b4b4;
  }
  &:last-child {
    border-right: 0;
    box-shadow: none;
  }
`;

const Break = styled.span`
  width: 3px;
`;

const ToolButton = styled.button`
  display: grid;
  place-items: center;
  width: 24px;
  height: 24px;
  padding: 0;
  border: 0;
  background: none;

  ${(p) =>
    p.$pressed &&
    css`
      background: #f7f7f7;
      box-shadow: inset 1px 1px 0 #9a9a9a;
    `}
`;

const OptionBar = styled.form`
  display: flex;
  align-items: center;
  gap: 3px;
  height: 31px;
  padding: 0 4px 1px;
  border-top: 2px solid #8a8a8a;
  border-bottom: 2px solid #9a9a9a;
`;

const OptionLabel = styled.label`
  flex: none;
  line-height: 22px;
  white-space: nowrap;
`;

const SelectBox = styled.span`
  position: relative;
  flex: none;
  width: ${(p) => p.$w}px;
  height: 24px;

  svg {
    position: absolute;
    right: 4px;
    top: 9px;
    pointer-events: none;
  }
`;

const Select = styled.select`
  appearance: none;
  width: 100%;
  height: 24px;
  padding: 0 16px 2px 2px;
  border: 1px solid #8c8c8c;
  border-radius: 0;
  background: ${(p) => (p.$muted ? "#dedede" : "#fff")};
  line-height: 20px;

  ${(p) =>
    p.$line &&
    css`
      background: linear-gradient(#fff, #fff) 4px 10px / 44px 2px no-repeat,
        linear-gradient(#858585, #858585) 1px 1px / 50px 20px no-repeat, #fff;
    `}
`;

const ColorButton = styled.button`
  display: grid;
  place-items: center;
  flex: none;
  width: 37px;
  height: 22px;
  padding: 0;
  border: 0;
  background: #858585;

  &::after {
    content: "";
    width: 14px;
    height: 13px;
    background: #fff;
  }
`;

const CheckLabel = styled.label`
  display: flex;
  align-items: center;
  gap: 3px;
  margin-right: 10px;
  white-space: nowrap;
`;

const Check = styled.input`
  appearance: none;
  display: grid;
  place-items: center;
  width: 13px;
  height: 13px;
  border: 1px solid #333;
  background: #fff;

  &:checked::after {
    content: "";
    width: 5px;
    height: 9px;
    margin-bottom: 3px;
    border: solid #222;
    border-width: 0 1px 1px 0;
    transform: rotate(45deg);
  }
`;

const Workspace = styled.main`
  display: flex;
  flex: 1;
  border-bottom: 2px solid #7c7c7c;
  margin-bottom: 2px;
`;

const DocWindow = styled.section`
  display: flex;
  flex: 1;
  flex-direction: column;
  min-width: 0;
  margin-top: 2px;
  padding: 0 7px 8px;
  border: 1px solid #6f6f73;
  border-right-width: 3px;
  border-top-left-radius: 7px;
  background: linear-gradient(#bccad9, #d6e3f1 30px);
`;

const DocTitle = styled.h1`
  display: flex;
  align-items: center;
  gap: 5px;
  height: 30px;
  margin: 0;
  padding: 4px 3px 0;
  color: #9b9fa4;
  font-size: 15px;
  font-weight: 400;
`;

const Viewport = styled.div`
  flex: 1;
  min-height: 0;
  background: linear-gradient(#000040, #c0c0c0);
  overflow: hidden;

  svg {
    display: block;
    width: 100%;
  }
`;

const SidePanel = styled.aside`
  flex: none;
  width: 135px;
  padding: 2px 2px 0 3px;
`;

const PanelTitle = styled.h2`
  height: 20px;
  margin: 0 2px 0 1px;
  padding-left: 6px;
  border-top: 1px solid #c4c4c4;
  background: linear-gradient(#ededed, #cdcdcd);
  font-size: 12px;
  font-weight: 400;
  line-height: 19px;
  font-feature-settings: "palt";
`;

const IconRow = styled.div`
  display: flex;
  height: 32px;
`;

const IconCell = styled.button`
  position: relative;
  display: grid;
  place-items: center;
  width: 32px;
  height: 32px;
  padding: 0;
  border: 0;
  background: none;

  ${(p) =>
    p.$active &&
    css`
      background: #fafafa;
      box-shadow: inset 1px 1px 0 1px #99998f;

      &::after {
        content: "";
        position: absolute;
        inset: -9px -10px -9px -8px;
        border: 6px solid #f00;
      }
    `}
`;

const HintAnchor = styled.div`
  position: relative;
`;

const Hint = styled.div`
  position: absolute;
  z-index: 2;
  top: 1px;
  left: 0;
  height: 20px;
  padding: 0 5px;
  border: 1px solid #8f8f6a;
  background: linear-gradient(#fbfbb8, #e6e68e);
  font-size: 12px;
  line-height: 18px;
  white-space: nowrap;
  font-feature-settings: "palt";
`;

const TabStrip = styled.nav`
  flex: none;
  width: 38px;
  padding-top: 3px;
  border-left: 2px solid #98988c;
`;

const SideTab = styled.button`
  display: grid;
  place-items: center;
  width: 36px;
  height: ${(p) => (p.$long ? 65 : 47)}px;
  margin-left: -2px;
  padding: 0 6px 0 0;
  border: 0;
  background: none;
  font-size: 13px;
  line-height: 14px;
  writing-mode: vertical-rl;

  ${(p) =>
    p.$active &&
    css`
      padding-right: 4px;
      border: solid #98988c;
      border-width: 2px 2px 2px 0;
      background: #f0f0f0;
    `}
`;

const InfoWindow = styled.section`
  position: absolute;
  top: 62px;
  right: 180px;
  width: 574px;
  border: 1px solid #4a8fcb;
  border-top: 7px solid #0063b1;
  background: #f0f0f0;
  box-shadow: 0 2px 12px rgba(0, 0, 0, 0.45);
`;

const InfoBar = styled.header`
  display: flex;
  justify-content: space-between;
  height: 20px;
  border-bottom: 1px solid #ddd;
`;

const InfoTab = styled.h2`
  height: 20px;
  margin: 0;
  padding: 0 3px 0 6px;
  background: #fff;
  font-size: 11px;
  font-weight: 400;
  line-height: 20px;
  font-feature-settings: "palt";
`;

const CloseButton = styled.button`
  display: grid;
  place-items: center;
  width: 17px;
  height: 18px;
  margin: 2px 1px 0 0;
  padding: 0;
  border: 1px solid #c05656;
  background: #d0605f;
`;

const InfoFrame = styled.div`
  margin: 5px 10px 8px 9px;
  padding: 1px 3px 3px;
  border: 1px solid #4f9fe0;
`;

const InfoText = styled.div`
  padding: 8px 0 11px 2px;
  border: 6px solid #f00;
  line-height: 13px;
  white-space: pre;
`;

const InfoBlock = styled.section`
  & + & {
    margin-top: 12px;
  }
`;

const BlockHeading = styled.h3`
  margin: 0;
  font-size: 14px;
  font-weight: 400;
`;

const Fields = styled.dl`
  display: grid;
  grid-template-columns: 63px 14px 1fr;
  margin: ${(p) => (p.$apart ? "12px 0 0 8px" : "0 0 0 8px")};
`;

const Field = styled.dd`
  margin: 0;
`;

const Half = styled.span`
  font-feature-settings: "hwid";
`;

const Colon = styled(Half)`
  text-align: center;
`;

/* latin runs take half the width of a kanji, so the columns line up */
const Grid = ({ children }) =>
  children.split(/([ -~¥]+)/).map((part, i) => (i % 2 ? <Half key={i}>{part}</Half> : part));

const ToolGroup = ({ names }) => (
  <Group>
    {names.split(" ").map((entry, i) => {
      if (entry === "|") return <Break key={i} />;
      const name = entry.replace("*", "");
      return (
        <ToolButton key={i} type="button" aria-label={name} $pressed={entry.endsWith("*")}>
          <svg width="24" height="24" viewBox="0 0 24 25" aria-hidden="true">
            {icons[name]}
          </svg>
        </ToolButton>
      );
    })}
  </Group>
);

const Dropdown = ({ id, width, options, ...rest }) => (
  <SelectBox $w={width}>
    <Select id={id} {...rest}>
      {options.map((o) => (
        <option key={o}>{o}</option>
      ))}
    </Select>
    <svg width="10" height="7" viewBox="0 0 10 7" aria-hidden="true">
      <path d="M1 1l4 4 4-4" fill="none" stroke="#666" />
    </svg>
  </SelectBox>
);

const Options = () => (
  <OptionBar>
    <OptionLabel htmlFor="lineType">線種</OptionLabel>
    <Dropdown id="lineType" width={71} options={[""]} $line />
    <OptionLabel htmlFor="lineColor">線色</OptionLabel>
    <ColorButton id="lineColor" type="button" />
    <OptionLabel htmlFor="layer">ﾚｲﾔ</OptionLabel>
    <Dropdown id="layer" width={51} options={["1", "2", "3"]} />
    <OptionLabel htmlFor="grid">ｸﾞﾘｯﾄﾞ</OptionLabel>
    <Dropdown id="grid" width={92} options={["0.0", "1.0", "5.0"]} />
    <OptionLabel htmlFor="scale">尺度</OptionLabel>
    <Dropdown id="scale" width={92} options={["1/1", "1/2", "1/5"]} />
    <OptionLabel htmlFor="middle">中ﾎﾞﾀﾝ</OptionLabel>
    <Dropdown id="middle" width={83} options={["ﾊﾟﾆﾝｸﾞ"]} $muted />
    <CheckLabel>
      <Check type="checkbox" defaultChecked />
      ﾅﾋﾞ
    </CheckLabel>
    <CheckLabel>
      <Check type="checkbox" defaultChecked />
      ｸﾛｽ
    </CheckLabel>
  </OptionBar>
);

const Scene = () => (
  <svg viewBox="10 122 1341 799" role="img" aria-label="溶接_羽根つきBOX_t2">
    <path d="M10 667L133 596" stroke="#e0d820" strokeWidth="1.500" />
    <path d="M132.500 357V452" stroke="#2424b8" strokeWidth="1.500" />

    {/* outer shell */}
    <path d="M383 307L885 597V740L634 884L133 597V452z" fill="#afafaf" />
    <path d="M383 314L143 453L263 521L383 452z" fill="#979797" />
    <path d="M383 314V452L754 665L874 597z" fill="#6f6f6f" />
    <path d="M383 452L754 665L634 734L263 520z" fill="#afafaf" />
    <path d="M133 454L634 741V884L133 597z" fill="#6f6f6f" />
    <path d="M634 741L885 598V740L634 884z" fill="#979797" />
    <g fill="none" stroke="#a6a6a6" strokeWidth="1">
      <path d="M133 452V597L634 884L885 740V597" />
      <path d="M634 741V884M383 314V452" />
      <path d="M142 457V591L263 521M142 591L634 874L875 737V603" />
      <path d="M754 665L875 737" />
    </g>

    {/* far bracket, edges only */}
    <g fill="none" stroke="#a8a8a8" strokeWidth="1.200">
      <path d="M546 431L551 427L726 528V594L762 573V579L725 600L550 499Q546 498 546 494z" />
      <path d="M546 431L722 531L726 528M722 531V598L725 600M551 428V492L726 594" />
      <path d="M550 498L587 478V473L762 573M553 492L587 473M587 478L762 579" />
    </g>

    {/* near bracket */}
    <path d="M255 666L291 645L466 745L430 767z" fill="#b0b0b0" />
    <path d="M255 666L430 767V770L255 671z" fill="#7a7a7a" stroke="#a8a8a8" />
    <path d="M291 577L295 574L471 676V741Q471 746 467 749L430 770V766L464 746Q466 744 466 741V680z" fill="#aaa" />
    <path d="M295 581L466 680V741L295 643z" fill="#6f6f6f" />
    <path d="M290.500 577V645M295.500 579V645L466 742M291 577L466 679" fill="none" stroke="#aeaeae" />

    {/* view axes */}
    <path d="M79 194L54 208L50 206L38 219L54 218L55 212L83 198z" fill="#f4e400" />
    <path d="M83 192L108 207L112 205L123 219L107 217L106 211L80 197z" fill="#d82020" />
    <path d="M77 195V160H75L81 144L87 160H85V195z" fill="#2020c8" />
    <g fontFamily="Liberation Mono" fontSize="14">
      <text x="81" y="146" fill="#2424b8">
        Y
      </text>
      <text x="31" y="223" fill="#c8b820">
        Z
      </text>
      <text x="131" y="223" fill="#c82030">
        X
      </text>
      <text x="136" y="357" fontSize="15" fill="#2424b8">
        Y
      </text>
    </g>
    <text x="133" y="138" fontSize="12" fill="#fff">
      ユーザビュー１
    </text>
  </svg>
);

const Information = ({ onClose }) => (
  <InfoWindow>
    <InfoBar>
      <InfoTab>インフォメーション</InfoTab>
      <CloseButton type="button" aria-label="閉じる" onClick={onClose}>
        <svg width="10" height="10" viewBox="0 0 10 10" aria-hidden="true">
          <path d="M1 1l8 8M9 1L1 9" stroke="#fff" strokeWidth="2.500" />
        </svg>
      </CloseButton>
    </InfoBar>
    <InfoFrame>
      <InfoText>
        {infoBlocks.map((block, i) => (
          <InfoBlock key={i}>
            <BlockHeading>
              <Grid>{block.heading}</Grid>
            </BlockHeading>
            <Fields>
              {solidRows.map(([label, value]) => (
                <React.Fragment key={label}>
                  <dt>{label}</dt>
                  <Colon>:</Colon>
                  <Field>
                    <Grid>{value}</Grid>
                  </Field>
                </React.Fragment>
              ))}
            </Fields>
            {block.state && (
              <Fields $apart>
                <dt>表現状態</dt>
                <Colon>:</Colon>
                <Field>{block.state}</Field>
              </Fields>
            )}
          </InfoBlock>
        ))}
      </InfoText>
    </InfoFrame>
  </InfoWindow>
);

const Panel = () => (
  <SidePanel>
    {panelSections.map(({ title, rows }) => (
      <section key={title}>
        <PanelTitle>{title}</PanelTitle>
        {title === "分解" && (
          <HintAnchor>
            <Hint role="tooltip">要素情報を表示する</Hint>
          </HintAnchor>
        )}
        {rows.map((row) => (
          <IconRow key={row}>
            {row.split(" ").map((name) => (
              <IconCell key={name} type="button" aria-label={name} $active={name === "infoSolid"}>
                <svg width="28" height="28" viewBox="0 0 28 28" aria-hidden="true">
                  {sideIcons[name]}
                </svg>
              </IconCell>
            ))}
          </IconRow>
        ))}
      </section>
    ))}
  </SidePanel>
);

const App = () => {
  const [tab, setTab] = useState("ツール");
  const [infoOpen, setInfoOpen] = useState(true);

  return (
    <>
      <GlobalStyle />
      <Defs />
      <Shell>
        <Toolbar>
          {rowOne.map((names) => (
            <ToolGroup key={names} names={names} />
          ))}
        </Toolbar>
        <Toolbar>
          {rowTwo.map((names) => (
            <ToolGroup key={names} names={names} />
          ))}
        </Toolbar>
        <Options />
        <Workspace>
          <DocWindow>
            <DocTitle>
              <svg width="14" height="16" viewBox="0 0 14 16" aria-hidden="true">
                <path d="M1 1h9l3 3v11H1z" fill="#fff" stroke="#888" />
                <rect x="3" y="5" width="8" height="7" fill="#000" />
              </svg>
              溶接_羽根つきBOX_t2
            </DocTitle>
            <Viewport>
              <Scene />
            </Viewport>
          </DocWindow>
          <Panel />
          <TabStrip>
            {sideTabs.map((name) => (
              <SideTab
                key={name}
                type="button"
                $long={name.length > 3}
                $active={name === tab}
                onClick={() => setTab(name)}
              >
                {name}
              </SideTab>
            ))}
          </TabStrip>
        </Workspace>
        {infoOpen && <Information onClose={() => setInfoOpen(false)} />}
      </Shell>
    </>
  );
};

export default App;
